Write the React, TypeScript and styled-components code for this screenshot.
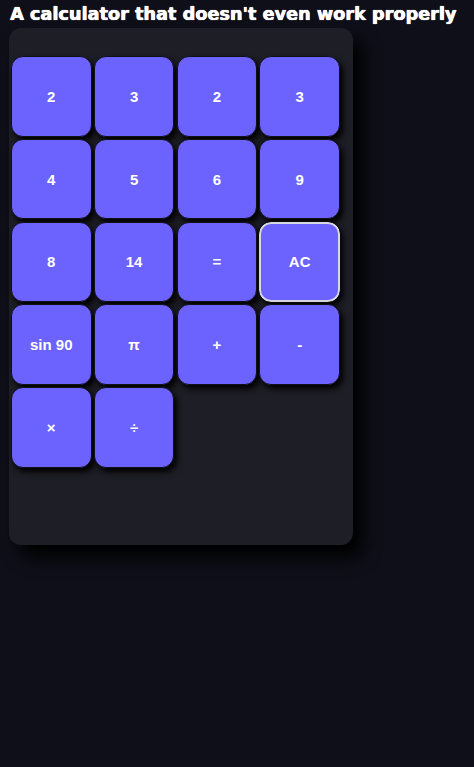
import React from "react";
import styled, { createGlobalStyle } from "styled-components";

const Global = createGlobalStyle`
  html, body { margin: 0; padding: 0; background: #0e0f18; }
  body { font-family: "Liberation Sans", Arial, sans-serif; min-height: 767px; }
`;

const Page = styled.div`
  display: flex;
  flex-direction: column;
  padding: 4px 0 0 9px;
`;

const Title = styled.h1`
  margin: 0 0 4px 1px;
  font-family: "DejaVu Sans", Verdana, sans-serif;
  font-weight: 700;
  font-size: 17.7px;
  line-height: 20px;
  color: #ffffff;
  text-shadow: 0.4px 0 0 #ffffff, 0 0 1px #ffffff;
  white-space: nowrap;
`;

const Panel = styled.div`
  width: 344px;
  height: 517px;
  box-sizing: border-box;
  background: #1e1e26;
  border-radius: 12px;
  box-shadow: 10px 12px 18px #000000;
  padding: 28px 0 0 2px;
`;

const Grid = styled.div`
  display: grid;
  grid-template-columns: repeat(4, 80.5px);
  grid-auto-rows: 80.5px;
  gap: 2.3px;
`;

const Key = styled.button<{ $focused?: boolean }>`
  box-sizing: border-box;
  width: 100%;
  height: 100%;
  border-radius: 12px;
  border: ${(p) => (p.$focused ? "2px solid #d8d8e0" : "1px solid #101018")};
  outline: ${(p) => (p.$focused ? "1px solid #0a0a10" : "none")};
  background: #6c63ff;
  color: #ffffff;
  font-family: "Liberation Sans", Arial, sans-serif;
  font-weight: 700;
  font-size: 15px;
  box-shadow: 3px 4px 6px #000000;
  display: flex;
  align-items: center;
  justify-content: center;
  padding: 0;
  cursor: pointer;
`;

const keys = ["2", "3", "2", "3", "4", "5", "6", "9", "8", "14", "=", "AC", "sin 90", "π", "+", "-", "×", "÷"];

export default function App() {
  return (
    <>
      <Global />
      <Page>
        <Title>A calculator that doesn't even work properly</Title>
        <Panel>
          <Grid>
            {keys.map((k, i) => (
              <Key key={i} $focused={k === "AC"}>
                {k}
              </Key>
            ))}
          </Grid>
        </Panel>
      </Page>
    </>
  );
}
